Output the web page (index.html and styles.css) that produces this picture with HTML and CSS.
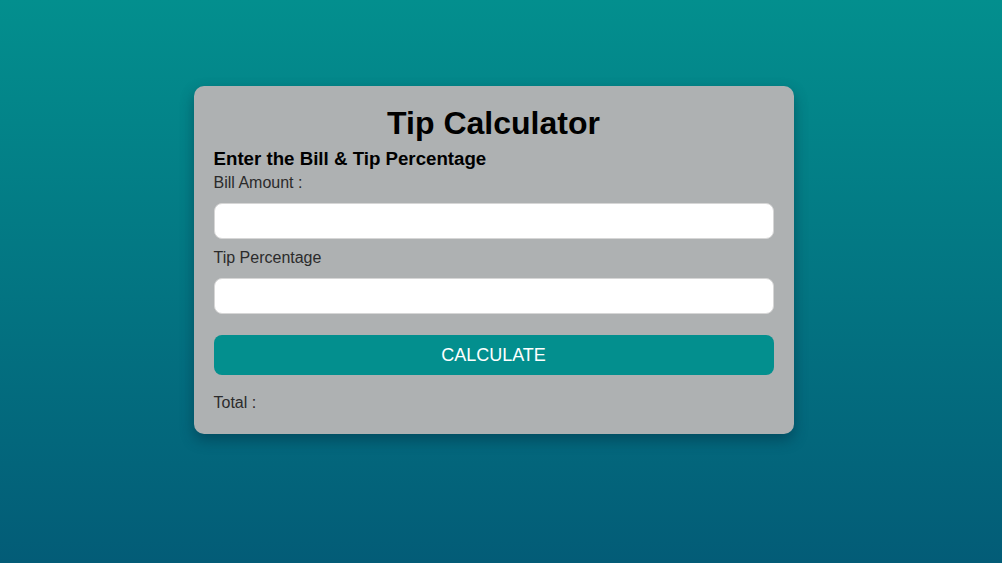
FILE: index.html
```html
<!DOCTYPE html>
<html lang="en">
<head>
<meta charset="utf-8">
<title>Tip Calculator</title>
<link rel="stylesheet" href="styles.css">
</head>
<body>
<main class="page">
  <section class="card">
    <h1 class="title">Tip Calculator</h1>
    <h3 class="subtitle">Enter the Bill &amp; Tip Percentage</h3>
    <label class="label label-bill" for="bill">Bill Amount :</label>
    <input class="field" id="bill" type="text">
    <label class="label label-tip" for="tip">Tip Percentage</label>
    <input class="field" id="tip" type="text">
    <button class="btn" type="button">CALCULATE</button>
    <p class="total">Total :</p>
  </section>
</main>
</body>
</html>
```
FILE: styles.css
```css
html, body {
  margin: 0;
  padding: 0;
  height: 100%;
}
body {
  background: linear-gradient(to bottom, #038f8e 0%, #035c77 100%);
  font-family: "Liberation Sans", Arial, sans-serif;
  overflow: hidden;
}
.page {
  display: flex;
  justify-content: center;
  padding: 86px 15px 0 0;
}
.card {
  width: 560px;
  background: #aeb1b2;
  border-radius: 10px;
  padding: 19px 20px 22px;
  display: flex;
  flex-direction: column;
  box-shadow: 0 6px 14px rgba(0, 40, 60, 0.45);
}
.title {
  margin: 0;
  font-size: 32px;
  line-height: 37px;
  text-align: center;
  color: #000;
}
.subtitle {
  margin: 6px 0 0;
  font-size: 18.7px;
  line-height: 22px;
  color: #000;
}
.label {
  font-size: 16px;
  line-height: 18px;
  color: #2b2b2b;
}
.label-bill { margin-top: 4px; }
.label-tip { margin-top: 10px; }
.field {
  box-sizing: border-box;
  height: 36px;
  margin: 11px 0 0;
  border: 1px solid #d6d6d6;
  border-radius: 8px;
  background: #fff;
  font-size: 16px;
  padding: 0 10px;
}
.btn {
  margin-top: 21px;
  height: 40px;
  border: none;
  border-radius: 8px;
  background: #038f8e;
  color: #fff;
  font-family: "Liberation Sans", Arial, sans-serif;
  font-size: 18px;
}
.total {
  margin: 19px 0 0;
  font-size: 16px;
  line-height: 18px;
  color: #2b2b2b;
}
```
